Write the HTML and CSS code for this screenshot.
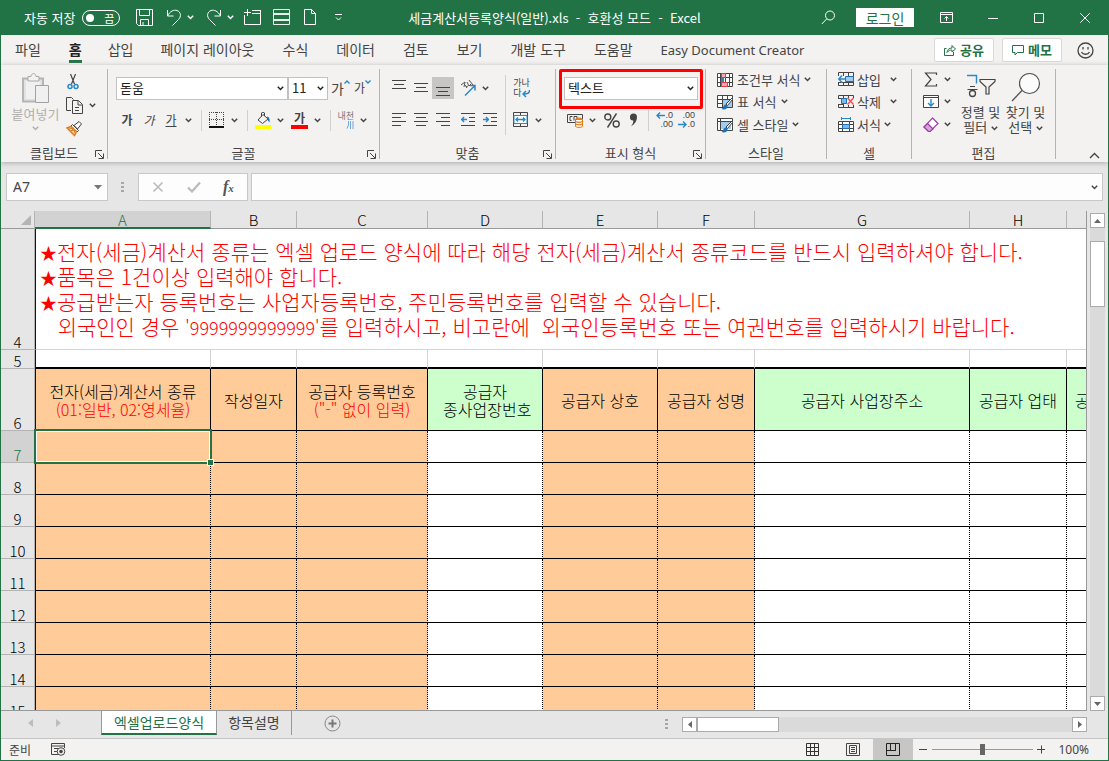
FILE: index.html
```html
<!DOCTYPE html>
<html lang="ko">
<head>
<meta charset="utf-8">
<title>세금계산서등록양식(일반).xls - Excel</title>
<link rel="stylesheet" href="styles.css">
</head>
<body>
<svg class="defs" aria-hidden="true">
  <symbol id="chev" viewBox="0 0 7 5"><path d="M.8 .8 3.5 3.5 6.2 .8" fill="none" stroke="currentColor" stroke-width="1.5"/></symbol>
  <symbol id="launch" viewBox="0 0 9 9"><path d="M.5 7V.5H7M3 3l5 5M8.5 3.5v5h-5" fill="none" stroke="currentColor"/></symbol>
</svg>
<div class="window">
  <header class="titlebar">
    <div class="quick">
      <label class="autosave">자동 저장 <button class="toggle" aria-label="자동 저장"><span class="knob"></span>끔</button></label>
      <button class="qbtn q-save" aria-label="저장"><svg width="17" height="17" viewBox="0 0 17 17"><path d="M.5.5h16v16H2.500l-2-2zM3.500 .5v6h10v-6M4.500 16.500v-6h8v6M7 13v3" /></svg></button>
      <button class="qbtn q-undo" aria-label="실행 취소"><svg width="16" height="17" viewBox="0 0 16 17"><path d="M1.500 1v6h6M1.500 7C4 2 8 .5 11 1.500c4 1.500 4.500 6 1.500 9L6.500 16.500"/></svg><svg class="chev"><use href="#chev"/></svg></button>
      <button class="qbtn q-redo" aria-label="다시 실행"><svg width="16" height="17" viewBox="0 0 16 17"><path d="M14.500 1v6h-6M14.500 7C12 2 8 .5 5 1.500c-4 1.500-4.500 6-1.500 9l6 6"/></svg><svg class="chev"><use href="#chev"/></svg></button>
      <button class="qbtn q-new" aria-label="삽입"><svg width="17" height="17" viewBox="0 0 17 17"><path d="M3.500 0v7M0 3.500h7M8 1.500h8.500M8 4.500h8.500M.5 6v9.500h16V1"/></svg></button>
      <button class="qbtn q-rows" aria-label="행"><svg width="17" height="17" viewBox="0 0 17 17"><path d="M.5.5h16v15H.5zM.5 4.500h16M.5 10.500h16M.5 5.500h16M.5 11.500h16" stroke-width=".9"/></svg></button>
      <button class="qbtn q-file" aria-label="새로 만들기"><svg width="12" height="17" viewBox="0 0 12 17"><path d="M.5.5h7l4 4v11H.5zM7.500.5v4h4"/></svg></button>
      <button class="qbtn q-more" aria-label="사용자 지정"><svg width="7" height="7" viewBox="0 0 7 7"><path d="M0 .5h7M1 3.500l2.500 2.500L6 3.500"/></svg></button>
    </div>
    <div class="doc-title">세금계산서등록양식(일반).xls &nbsp;-&nbsp; 호환성 모드 &nbsp;-&nbsp; Excel</div>
    <div class="win-tools">
      <button class="qbtn" aria-label="검색"><svg width="15" height="15" viewBox="0 0 15 15"><circle cx="9" cy="5.500" r="4.500"/><path d="M5.800 8.800.8 14"/></svg></button>
      <button class="login">로그인</button>
      <button class="qbtn w-ribbon" aria-label="리본 표시 옵션"><svg width="13" height="11" viewBox="0 0 13 11"><path d="M.5.5h12v10H.5zM.5 2.500h12M6.500 9V4.500M4.500 6.500l2-2 2 2"/></svg></button>
      <button class="qbtn w-btn" aria-label="최소화"><svg width="10" height="10" viewBox="0 0 10 10"><path d="M0 5.500h10"/></svg></button>
      <button class="qbtn w-btn" aria-label="최대화"><svg width="10" height="10" viewBox="0 0 10 10"><path d="M.5.5h9v9h-9z"/></svg></button>
      <button class="qbtn w-btn" aria-label="닫기"><svg width="10" height="10" viewBox="0 0 10 10"><path d="M.3.3l9.400 9.400M9.700.3.3 9.700"/></svg></button>
    </div>
  </header>

  <nav class="tabs">
    <a href="#">파일</a><a href="#" class="on">홈</a><a href="#">삽입</a><a href="#">페이지 레이아웃</a><a href="#">수식</a><a href="#">데이터</a><a href="#">검토</a><a href="#">보기</a><a href="#">개발 도구</a><a href="#">도움말</a><a href="#" class="latin">Easy Document Creator</a>
    <div class="tab-actions">
      <button class="pill"><svg width="12" height="12" viewBox="0 0 12 12"><path d="M2.500 4.500h-2v7h9V8M3 8.500C3.500 5.500 5 4 8 4V1.500l3.500 3.500L8 8V6C6 6 4.500 6.500 3 8.500z"/></svg>공유</button>
      <button class="pill"><svg width="12" height="12" viewBox="0 0 12 12"><path d="M.5 1.500h11v7h-6l-2.500 2.500V8.500H.5z"/></svg>메모</button>
      <button class="smile" aria-label="의견"><svg width="17" height="17" viewBox="0 0 17 17"><circle cx="8.500" cy="8.500" r="7.500"/><path d="M4.500 10c1.500 3 6.500 3 8 0M6 5v2.500M11 5v2.500"/></svg></button>
    </div>
  </nav>

  <section class="ribbon">
    <div class="group g-clip">
      <div class="body">
        <button class="paste"><svg width="28" height="31" viewBox="0 0 28 31"><path d="M1 5.500h20v23H1z" fill="#e2e2e2" stroke="#b5b5b5" stroke-width="2"/><path d="M4 8h14v18H4z" fill="#f0f0f0"/><path d="M6 8V3.500h3c.5-4 4.500-4 5 0h3V8z" fill="#f3f2f1" stroke="#a9a9a9"/><path d="M13.500 12.500h13v17h-13z" fill="#f0f0f0" stroke="#a2a2a2"/></svg><span>붙여넣기</span><svg class="chev"><use href="#chev"/></svg></button>
        <div class="clip-col">
          <button aria-label="잘라내기"><svg width="14" height="17" viewBox="0 0 14 17"><path d="M4.500 1l4 10M9.500 1l-4 10" stroke="#444" stroke-width="1.200"/><circle cx="4" cy="13.500" r="2" stroke="#2b88c8" stroke-width="1.500"/><circle cx="10" cy="13.500" r="2" stroke="#2b88c8" stroke-width="1.500"/></svg></button>
          <button aria-label="복사"><svg width="17" height="17" viewBox="0 0 17 17"><path d="M5 13.500H.5V.5h5l2 2M6.500 3.500h6l4 4v9h-10zM12 4v4h4M9 10.500h4M9 13.500h4" stroke="#444"/></svg><svg class="chev"><use href="#chev"/></svg></button>
          <button aria-label="서식 복사"><svg width="17" height="16" viewBox="0 0 17 16"><path d="M8 4.500l5-4 2.500 2.500-4 5z" fill="#f7f7f7" stroke="#444"/><path d="M5 5l6 6 1.500-1.500L6.500 3.500z" fill="#fff" stroke="#444"/><path d="M5 5.500 1 7l7.500 7.500 2-4z" fill="#fde3c8" stroke="#e07b1a" stroke-width="1.500"/><path d="M3 8l5-1-3 3 4-1-1 3" stroke="#e07b1a"/></svg></button>
        </div>
      </div>
      <div class="cap"><span>클립보드</span><button aria-label="클립보드 옵션"><svg><use href="#launch"/></svg></button></div>
    </div>

    <div class="group g-font">
      <div class="body rows">
        <div class="r">
          <label class="combo c-font"><select aria-label="글꼴"><option>돋움</option></select><svg class="chev"><use href="#chev"/></svg></label>
          <label class="combo c-size"><select aria-label="크기"><option>11</option></select><svg class="chev"><use href="#chev"/></svg></label>
          <button class="grow">가<svg width="6" height="4" viewBox="0 0 6 4"><path d="M.5 3.500 3 1l2.500 2.500" stroke="#2b88c8" stroke-width="1.400"/></svg></button>
          <button class="grow shrink">가<svg width="6" height="4" viewBox="0 0 6 4"><path d="M.5.5 3 3 5.500.5" stroke="#2b88c8" stroke-width="1.400"/></svg></button>
        </div>
        <div class="r">
          <button class="ch bold">가</button><button class="ch ital">가</button><button class="ch und"><u>가</u></button><button class="arrow" aria-label="밑줄 옵션"><svg class="chev"><use href="#chev"/></svg></button>
          <i class="sep"></i>
          <button class="ic" aria-label="테두리"><svg width="16" height="16" viewBox="0 0 16 16"><path d="M0 .5h15M0 7.500h15M.5 0v14M7.500 0v14M14.500 0v14" stroke="#444" stroke-dasharray="1 1"/><path d="M0 15h15" stroke="#111" stroke-width="2"/></svg></button><button class="arrow" aria-label="테두리 옵션"><svg class="chev"><use href="#chev"/></svg></button>
          <i class="sep"></i>
          <button class="ic" aria-label="채우기 색"><svg width="16" height="17" viewBox="0 0 16 17"><path d="M8 2.500 3 8l4.500 3.500L13 7zM6.500 4.500V1c0-1 3-1 3 0v3" stroke="#444"/><path d="M12 4.500c2 0 3 2 2.500 6L12.500 8z" fill="#1e6fb8"/><path d="M0 13h16v4H0z" fill="#ff0"/></svg></button><button class="arrow" aria-label="채우기 색 옵션"><svg class="chev"><use href="#chev"/></svg></button>
          <button class="fcolor">가</button><button class="arrow" aria-label="글꼴 색 옵션"><svg class="chev"><use href="#chev"/></svg></button>
          <i class="sep"></i>
          <button class="ruby"><span>내천</span><svg width="8" height="8" viewBox="0 0 8 8"><path d="M2.500 0v4L1 7.500M4.500 0v8M7 0v8" stroke="#6fa8d6"/></svg></button><button class="arrow" aria-label="윗주 옵션"><svg class="chev"><use href="#chev"/></svg></button>
        </div>
      </div>
      <div class="cap"><span>글꼴</span><button aria-label="글꼴 옵션"><svg><use href="#launch"/></svg></button></div>
    </div>

    <div class="group g-align">
      <div class="body">
        <div class="rows">
          <div class="r">
            <button class="al" aria-label="위쪽 맞춤"><svg width="14" height="18" viewBox="0 0 14 18"><path d="M0 1.500h14M2 5.500h10M0 9.500h14"/></svg></button><button class="al" aria-label="가운데 맞춤"><svg width="14" height="18" viewBox="0 0 14 18"><path d="M0 4.500h14M2 8.500h10M0 12.500h14"/></svg></button><button class="al on" aria-label="아래쪽 맞춤"><svg width="14" height="18" viewBox="0 0 14 18"><path d="M0 8.500h14M2 12.500h10M0 16.500h14"/></svg></button>
            <button class="al wide" aria-label="방향"><svg width="17" height="17" viewBox="0 0 17 17"><path d="M5 15.500 14.500 6M10 5.500h5v5" stroke="#2b88c8" stroke-width="1.500"/><path d="M1 5l4-3-1 5M5 5l2 3M6 7l2-1M7 2l2 4 2-2M9 0l4 5" stroke="#555"/></svg></button><button class="arrow" aria-label="방향 옵션"><svg class="chev"><use href="#chev"/></svg></button>
          </div>
          <div class="r">
            <button class="al" aria-label="왼쪽"><svg width="14" height="14" viewBox="0 0 14 14"><path d="M0 .5h14M0 4.500h9M0 8.500h14M0 12.500h9"/></svg></button><button class="al" aria-label="가운데"><svg width="14" height="14" viewBox="0 0 14 14"><path d="M0 .5h14M2 4.500h10M0 8.500h14M2 12.500h10"/></svg></button><button class="al" aria-label="오른쪽"><svg width="14" height="14" viewBox="0 0 14 14"><path d="M0 .5h14M5 4.500h9M0 8.500h14M5 12.500h9"/></svg></button>
            <button class="al wide" aria-label="내어쓰기"><svg width="14" height="14" viewBox="0 0 14 14"><path d="M0 .5h14M8 4.500h6M8 8.500h6M0 12.500h14"/><path d="M0 6.500h6M3 4 .7 6.500 3 9" stroke="#2b88c8" stroke-width="1.500"/></svg></button><button class="al" aria-label="들여쓰기"><svg width="14" height="14" viewBox="0 0 14 14"><path d="M0 .5h14M8 4.500h6M8 8.500h6M0 12.500h14"/><path d="M0 6.500h6M3 4l2.300 2.500L3 9" stroke="#2b88c8" stroke-width="1.500"/></svg></button>
          </div>
        </div>
        <i class="sep tall"></i>
        <div class="rows wraps">
          <div class="r"><button class="wrapbtn"><span>가나<br>다</span><svg width="8" height="8" viewBox="0 0 8 8"><path d="M7.500 0c0 3-1 4-6.500 4M4 1 1 4l3 3" stroke="#2b88c8" stroke-width="1.500"/></svg></button></div>
          <div class="r"><button class="ic" aria-label="병합"><svg width="16" height="16" viewBox="0 0 16 16"><path d="M.5.5h14v14H.5zM7.500 0v3M7.500 12v3" stroke="#444"/><path d="M1 3.500h13v8H1z" fill="#fff" stroke="#2b88c8"/><path d="M3 7.500h9M5 5.500l-2 2 2 2M10 5.500l2 2-2 2" stroke="#2b88c8" stroke-width="1.300"/></svg></button><button class="arrow" aria-label="병합 옵션"><svg class="chev"><use href="#chev"/></svg></button></div>
        </div>
      </div>
      <div class="cap"><span>맞춤</span><button aria-label="맞춤 옵션"><svg><use href="#launch"/></svg></button></div>
    </div>

    <div class="group g-num">
      <div class="body rows">
        <div class="r"><label class="combo c-num"><select aria-label="표시 형식"><option>텍스트</option></select><svg class="chev"><use href="#chev"/></svg></label></div>
        <div class="r nums">
          <button class="ic" aria-label="회계 형식"><svg width="17" height="16" viewBox="0 0 17 16"><path d="M8 10.500H.5v-8h15V7M5.500 4.500H3v4h1.500M7 8.500v-4h3M10 8V4.500" stroke="#444"/><path d="M8.500 7.500h7v7c-2 1.300-5 1.300-7 0z" fill="#fff" stroke="#e07b1a"/><path d="M8.500 9.500c2 1 5 1 7 0M8.500 12c2 1 5 1 7 0M8.500 7.500c2-1.500 5-1.500 7 0" stroke="#e07b1a" stroke-width="1.300"/></svg></button><button class="arrow" aria-label="회계 옵션"><svg class="chev"><use href="#chev"/></svg></button>
          <button class="pct" aria-label="백분율"><svg width="16" height="15" viewBox="0 0 16 15"><circle cx="3.800" cy="4" r="3"/><circle cx="12.200" cy="11" r="3"/><path d="M12.500.5 3.500 14.500"/></svg></button>
          <button class="comma" aria-label="쉼표"><svg width="9" height="14" viewBox="0 0 9 14"><path d="M1 4a3.400 3.400 0 1 1 7 0c0 4-2 7-6 9.500 1.500-2 2.500-4 2.300-6A3.300 3.300 0 0 1 1 4z" fill="#444" stroke="none"/></svg></button>
          <i class="sep"></i>
          <button class="dec"><span><svg width="9" height="7" viewBox="0 0 9 7"><path d="M9 3.500H1M4 .5l-3 3 3 3" stroke="#2b88c8" stroke-width="1.400"/></svg>.0</span><span>.00</span></button>
          <button class="dec"><span>.00</span><span><svg width="9" height="7" viewBox="0 0 9 7"><path d="M0 3.500h8M5 .5l3 3-3 3" stroke="#2b88c8" stroke-width="1.400"/></svg>.0</span></button>
        </div>
      </div>
      <div class="cap"><span>표시 형식</span><button aria-label="표시 형식 옵션"><svg><use href="#launch"/></svg></button></div>
    </div>

    <div class="group g-style">
      <div class="body list">
        <button><svg width="16" height="16" viewBox="0 0 16 16"><path d="M.5 1.500h15v13H.5zM3.500 1.500v13M8.500 1v14M12.500 1.500v13M1 5.500h14M1 10.500h14" fill="#fff" stroke="#444"/><path d="M4.500 1.500h4v4h-4zM4.500 10.500h6v4h-6z" fill="#f7a8b0" stroke="#e03a46"/><path d="M4 6h3v4H4z" fill="#2b88c8"/></svg>조건부 서식<svg class="chev"><use href="#chev"/></svg></button>
        <button><svg width="16" height="16" viewBox="0 0 16 16"><path d="M.5 1.500h15v12H.5zM1 5.500h14M1 9.500h14M5.500 2v11M10.500 2v11" fill="#fff" stroke="#444"/><path d="M6 6h9v7H6z" fill="#9fcbee"/><path d="M15.500 3.500 9 10l1.500 1.500 5-6z" fill="#fff" stroke="#444"/><path d="M9 10.500c-3 0-2 3-4.500 4.500 3 1 6.500 0 6-3z" fill="#1e6fb8"/></svg>표 서식<svg class="chev"><use href="#chev"/></svg></button>
        <button><svg width="16" height="16" viewBox="0 0 16 16"><path d="M.5 1.500h15v12H.5zM1 4.500h14M3.500 2v11" fill="#fff" stroke="#444"/><path d="M4 5h10v7H4z" fill="#9fcbee"/><path d="M15.500 3.500 9 10l1.500 1.500 5-6z" fill="#fff" stroke="#444"/><path d="M9 10.500c-3 0-2 3-4.500 4.500 3 1 6.500 0 6-3z" fill="#1e6fb8"/></svg>셀 스타일<svg class="chev"><use href="#chev"/></svg></button>
      </div>
      <div class="cap"><span>스타일</span></div>
    </div>

    <div class="group g-cell">
      <div class="body list">
        <button class="far"><svg width="16" height="15" viewBox="0 0 16 15"><path d="M.5 4V.5h15v13H.5V10M5.500.5V4M10.500.5V4M5.500 10v3.500M10.500 10v3.500M1 10.500h14" stroke="#444"/><path d="M7.500 4.500h8v5h-8z" fill="#9fcbee" stroke="#1e6fb8"/><path d="M8 7H1M4 3.500.8 7 4 10.500" stroke="#2b88c8" stroke-width="1.500"/></svg>삽입<svg class="chev"><use href="#chev"/></svg></button>
        <button class="far"><svg width="16" height="15" viewBox="0 0 16 15"><path d="M.5 4V1.500h15V4M.5 13.500h15M.5 11v2.500M5.500 1.500V4M10.500 1.500V4M5.500 10v3.500M10.500 11v3M15.500 11v3M0 4.500h5M0 10.500h5" stroke="#444"/><path d="M3.500 4.500h5v5h-5z" fill="#7db8e8" stroke="#1e6fb8"/><path d="M9.500 4l6 6.500M15.500 4l-6 6.500" stroke="#e8505b" stroke-width="1.500"/></svg>삭제<svg class="chev"><use href="#chev"/></svg></button>
        <button><svg width="16" height="16" viewBox="0 0 16 16"><path d="M.5 4.500h15v10H.5zM1 7.500h14M1 11.500h14M4.500 4v11M11.500 4v11" stroke="#444" fill="#fff"/><path d="M4.500 7.500h7v4h-7z" fill="#7db8e8" stroke="#1e6fb8"/><path d="M3.500 0v3M12.500 0v3M4 1.500h8" stroke="#2b88c8"/></svg>서식<svg class="chev"><use href="#chev"/></svg></button>
      </div>
      <div class="cap"><span>셀</span></div>
    </div>

    <div class="group g-edit">
      <div class="body">
        <div class="list small">
          <button aria-label="합계"><svg width="16" height="15" viewBox="0 0 16 15"><path d="M13.500 3V1h-11L8 7.500 2.500 14h11v-2" stroke="#444" stroke-width="1.200"/></svg><svg class="chev"><use href="#chev"/></svg></button>
          <button aria-label="채우기"><svg width="16" height="14" viewBox="0 0 16 14"><path d="M.5.5h15v12H.5zM0 2.500h16" fill="#fff" stroke="#444"/><path d="M8 4v7M5 8l3 3 3-3" stroke="#2b88c8" stroke-width="1.400"/></svg><svg class="chev"><use href="#chev"/></svg></button>
          <button aria-label="지우기"><svg width="16" height="16" viewBox="0 0 16 16"><path d="M9.500 1 15 6.500 7 14.500H5.500L1 10z" fill="#fff" stroke="#9b3fa5" stroke-width="1.200"/><path d="M4.500 6.500 10 12l-3 2.500H5.500L1 10z" fill="#d9a3e0" stroke="#9b3fa5" stroke-width="1.200"/></svg><svg class="chev"><use href="#chev"/></svg></button>
        </div>
        <button class="big"><svg width="30" height="32" viewBox="0 0 30 32"><path d="M1 3.500h9.500v8" stroke="#2b88c8" stroke-width="1.400"/><path d="M14 7.500h15v2l-6 5.500v7h-3v-7l-6-5.500zM4 14.500h5M1.500 17.500h10" stroke="#444" stroke-width="1.200"/><circle cx="6.500" cy="21.500" r="3" stroke="#444" stroke-width="1.300"/></svg><span>정렬 및<br>필터 <svg class="chev"><use href="#chev"/></svg></span></button>
        <button class="big"><svg width="30" height="32" viewBox="0 0 30 32"><circle cx="18.500" cy="11.500" r="10" fill="#fbfbfb" stroke="#555" stroke-width="1.200"/><path d="M11 18.500 1 29" stroke="#555" stroke-width="1.300"/></svg><span>찾기 및<br>선택 <svg class="chev"><use href="#chev"/></svg></span></button>
      </div>
      <div class="cap"><span>편집</span></div>
    </div>
    <button class="collapse" aria-label="리본 축소"><svg width="11" height="7" viewBox="0 0 11 7"><path d="M1 6l4.500-4.500L10 6" stroke="#444" stroke-width="1.400"/></svg></button>
  </section>

  <section class="formula">
    <label class="namebox"><input value="A7" aria-label="이름 상자"><svg width="8" height="5" viewBox="0 0 8 5"><path d="M0 0h8L4 4.500z" fill="#777"/></svg></label>
    <span class="dots"></span>
    <div class="fxbox">
      <button aria-label="취소"><svg width="12" height="12" viewBox="0 0 12 12"><path d="M1.500 1.500l9 9M10.500 1.500l-9 9" stroke="#bbb" stroke-width="1.600"/></svg></button>
      <button aria-label="입력"><svg width="14" height="12" viewBox="0 0 14 12"><path d="M1 6.500l4 4L13 1.500" stroke="#bbb" stroke-width="2.200"/></svg></button>
      <button class="fx"><i>f<small>x</small></i></button>
    </div>
    <label class="fxinput"><input aria-label="수식 입력줄"><svg class="chev"><use href="#chev"/></svg></label>
  </section>

  <main class="work">
    <div class="sheet">
      <table>
        <colgroup><col class="k0"><col class="kA"><col class="kB"><col class="kC"><col class="kD"><col class="kE"><col class="kF"><col class="kG"><col class="kH"><col></colgroup>
        <thead><tr><th class="corner"><svg width="10" height="10" viewBox="0 0 10 10"><path d="M10 0v10H0z" fill="#b4b4b4"/></svg></th><th class="sel">A</th><th>B</th><th>C</th><th>D</th><th>E</th><th>F</th><th>G</th><th>H</th><th></th></tr></thead>
        <tbody>
          <tr class="r4"><th>4</th><td colspan="9"><b>★</b>전자(세금)계산서 종류는 엑셀 업로드 양식에 따라 해당 전자(세금)계산서 종류코드를 반드시 입력하셔야 합니다.
<b>★</b>품목은 1건이상 입력해야 합니다.
<b>★</b>공급받는자 등록번호는 사업자등록번호, 주민등록번호를 입력할 수 있습니다.
   외국인인 경우 <span class="digits">'9999999999999'</span>를 입력하시고, 비고란에  외국인등록번호 또는 여권번호를 입력하시기 바랍니다.</td></tr>
          <tr class="r5"><th>5</th><td></td><td></td><td></td><td></td><td></td><td></td><td></td><td></td><td></td></tr>
          <tr class="r6"><th>6</th><td class="o">전자(세금)계산서 종류<br><em>(01:일반, 02:영세율)</em></td><td class="o">작성일자</td><td class="o">공급자 등록번호<br><em>("-" 없이 입력)</em></td><td class="g">공급자<br>&nbsp;종사업장번호</td><td class="o">공급자 상호</td><td class="o">공급자 성명</td><td class="g">공급자 사업장주소</td><td class="g">공급자 업태</td><td class="g cut">공</td></tr>
          <tr class="d cur"><th>7</th><td class="o"><span class="cursor"></span></td><td class="o"></td><td class="o"></td><td></td><td class="o"></td><td class="o"></td><td></td><td></td><td></td></tr>
          <tr class="d"><th>8</th><td class="o"></td><td class="o"></td><td class="o"></td><td></td><td class="o"></td><td class="o"></td><td></td><td></td><td></td></tr>
          <tr class="d"><th>9</th><td class="o"></td><td class="o"></td><td class="o"></td><td></td><td class="o"></td><td class="o"></td><td></td><td></td><td></td></tr>
          <tr class="d"><th>10</th><td class="o"></td><td class="o"></td><td class="o"></td><td></td><td class="o"></td><td class="o"></td><td></td><td></td><td></td></tr>
          <tr class="d"><th>11</th><td class="o"></td><td class="o"></td><td class="o"></td><td></td><td class="o"></td><td class="o"></td><td></td><td></td><td></td></tr>
          <tr class="d"><th>12</th><td class="o"></td><td class="o"></td><td class="o"></td><td></td><td class="o"></td><td class="o"></td><td></td><td></td><td></td></tr>
          <tr class="d"><th>13</th><td class="o"></td><td class="o"></td><td class="o"></td><td></td><td class="o"></td><td class="o"></td><td></td><td></td><td></td></tr>
          <tr class="d"><th>14</th><td class="o"></td><td class="o"></td><td class="o"></td><td></td><td class="o"></td><td class="o"></td><td></td><td></td><td></td></tr>
          <tr class="d"><th>15</th><td class="o"></td><td class="o"></td><td class="o"></td><td></td><td class="o"></td><td class="o"></td><td></td><td></td><td></td></tr>
        </tbody>
      </table>
    </div>
    <div class="vscroll">
      <button aria-label="위로"><svg width="7" height="4" viewBox="0 0 7 4"><path d="M0 4h7L3.500 0z"/></svg></button>
      <div class="track"><div class="thumb"></div></div>
      <button aria-label="아래로"><svg width="7" height="4" viewBox="0 0 7 4"><path d="M0 0h7L3.500 4z"/></svg></button>
    </div>
  </main>

  <section class="sheetbar">
    <div class="nav"><button aria-label="이전"><svg width="5" height="8" viewBox="0 0 5 8"><path d="M5 0v8L0 4z"/></svg></button><button aria-label="다음"><svg width="5" height="8" viewBox="0 0 5 8"><path d="M0 0v8l5-4z"/></svg></button></div>
    <button class="stab on">엑셀업로드양식</button><button class="stab">항목설명</button>
    <button class="add" aria-label="새 시트"><svg width="17" height="17" viewBox="0 0 17 17"><circle cx="8.500" cy="8.500" r="7.500" stroke="#888"/><path d="M4.500 8.500h8M8.500 4.500v8" stroke="#777" stroke-width="2"/></svg></button>
    <span class="dots"></span>
    <div class="hscroll">
      <button aria-label="왼쪽으로"><svg width="4" height="7" viewBox="0 0 4 7"><path d="M4 0v7L0 3.500z"/></svg></button>
      <div class="track"><div class="thumb"></div></div>
      <button aria-label="오른쪽으로"><svg width="4" height="7" viewBox="0 0 4 7"><path d="M0 0v7l4-3.500z"/></svg></button>
    </div>
  </section>

  <footer class="status">
    <span>준비</span>
    <button class="macro" aria-label="매크로 기록"><svg width="15" height="13" viewBox="0 0 15 13"><path d="M7 11.500H.5V.5h13V5M0 3h14M3 5.500h4M3 8.500h3" stroke="#444"/><circle cx="10" cy="8.500" r="3.800" stroke="#444" fill="#f3f2f1"/><circle cx="10" cy="8.500" r="1.800" fill="#444"/></svg></button>
    <div class="views">
      <button aria-label="기본"><svg width="14" height="13" viewBox="0 0 14 13"><path d="M.5.5h12v12H.5zM4.500 0v13M8.500 0v13M0 4.500h13M0 8.500h13" stroke="#333"/></svg></button>
      <button aria-label="페이지 레이아웃"><svg width="14" height="13" viewBox="0 0 14 13"><path d="M.5.5h13v12H.5zM3.500 2.500h7v8h-7zM5 4.500h4M5 6.500h4M5 8.500h4" stroke="#444"/></svg></button>
      <button class="on" aria-label="페이지 나누기"><svg width="14" height="13" viewBox="0 0 14 13"><path d="M.5.5h13v12H.5zM0 7.500h9M4.500 0v7M9.500 0v8" stroke="#222"/></svg></button>
    </div>
    <div class="zoom">
      <button aria-label="축소"><svg width="9" height="9" viewBox="0 0 9 9"><path d="M0 4.500h8" stroke="#444"/></svg></button>
      <input type="range" min="0" max="100" value="50" aria-label="확대/축소">
      <button aria-label="확대"><svg width="9" height="9" viewBox="0 0 9 9"><path d="M0 4.500h8M4.500 .5v8" stroke="#444"/></svg></button>
      <span class="pc">100%</span>
    </div>
  </footer>
</div>
</body>
</html>
```
FILE: styles.css
```css
* { box-sizing: border-box; }
body { margin: 0; font-family: "Noto Sans CJK KR", sans-serif; font-size: 13px; line-height: 16px; color: #444; }
button { border: 0; padding: 0; margin: 0; background: none; color: inherit; font: inherit; display: flex; align-items: center; justify-content: center; white-space: nowrap; }
input, select { font: inherit; color: inherit; border: 0; margin: 0; outline: 0; background: none; min-width: 0; border-radius: 0; }
svg { fill: none; flex: none; display: block; }
a { color: inherit; text-decoration: none; }
.defs { display: none; }
.chev { width: 7px; height: 5px; }
.window { height: 100vh; display: flex; flex-direction: column; border: 1px solid #217346; border-top: 0; background: #e6e6e6; overflow: hidden; }

/* title bar */
.titlebar { flex: none; height: 35px; background: #217346; color: #fff; display: grid; grid-template-columns: 1fr auto 1fr; align-items: center; }
.titlebar svg { stroke: #fff; }
.titlebar .chev { stroke: none; }
.quick { display: flex; align-items: center; padding-left: 23px; }
.autosave { display: flex; align-items: center; gap: 7px; }
.toggle { width: 38px; height: 16px; border: 1px solid #fff; border-radius: 8px; font-size: 11px; justify-content: space-between; padding: 0 5px 0 3px; line-height: 12px; }
.knob { width: 8px; height: 8px; border-radius: 50%; background: #fff; }
.qbtn { gap: 5px; }
.q-save { margin-left: 16px; }
.q-undo { margin-left: 13px; }
.q-redo, .q-rows { margin-left: 12px; }
.q-new { margin-left: 10px; }
.q-file { margin-left: 14px; }
.q-more { margin-left: 19px; }
.win-tools { display: flex; align-items: center; justify-content: flex-end; padding-right: 18px; }
.login { background: #fff; color: #217346; width: 58px; height: 19px; margin: 0 26px 0 20px; font-size: 14px; }
.w-btn { margin-left: 36px; }
.w-ribbon + .w-btn { margin-left: 35px; }

/* tabs */
.tabs { flex: none; height: 30px; background: #f3f2f1; display: flex; align-items: stretch; font-size: 14px; line-height: 28px; white-space: nowrap; }
.tabs > a { padding: 0 14px; }
.tabs > a:nth-child(3) { padding: 0 13px; }
.tabs > a.on { font-weight: 700; color: #222; display: flex; flex-direction: column; padding-right: 13px; }
.tabs > a.on::after { content: ""; height: 3px; margin-top: -3px; background: #217346; }
.tabs > a.latin { font-family: "Noto Sans", sans-serif; font-size: 13px; line-height: 30px; }
.tab-actions { margin-left: auto; display: flex; align-items: center; gap: 8px; padding-right: 14px; }
.pill { height: 24px; width: 60px; gap: 4px; background: #fff; border: 1px solid #dcdad8; border-radius: 2px; color: #217346; font-weight: 700; font-size: 13px; line-height: 20px; }
.pill svg { stroke: #217346; }
.smile { margin-left: 7px; }
.smile svg { stroke: #444; stroke-width: 1.300; }

/* ribbon */
.ribbon { flex: none; display: flex; background: #f3f2f1; padding: 4px 0 3px; box-shadow: 0 1px 5px #aaa; z-index: 1; }
.group { height: 90px; border-right: 1px solid #b6b4b2; display: flex; flex-direction: column; justify-content: space-between; flex: none; }
.body { display: flex; align-items: flex-start; }
.cap { display: grid; grid-template-columns: 12px 1fr 12px; height: 13px; align-items: center; line-height: 13px; }
.cap span { grid-column: 2; text-align: center; }
.cap button { grid-column: 3; justify-content: flex-start; align-self: end; }
.cap svg { width: 9px; height: 9px; }
.g-clip { width: 107px; }
.g-font { width: 272px; }
.g-align { width: 176px; }
.g-num { width: 150px; }
.g-style { width: 121px; }
.g-cell { width: 85px; }
.g-edit { width: 144px; }
.paste { flex-direction: column; width: 59px; padding: 4px 0 0 10px; color: #b1afad; }
.paste span { margin: 2px 0 4px; }
.clip-col { display: flex; flex-direction: column; padding-left: 6px; }
.clip-col button { height: 24px; justify-content: flex-start; gap: 6px; }
.body.rows, .body .rows { display: flex; flex-direction: column; align-items: stretch; gap: 8px; padding: 7px 0 0 8px; }
.r { height: 24px; display: flex; align-items: center; }
.combo { display: grid; grid-template-columns: 1fr 14px; align-items: center; height: 23px; border: 1px solid #c4c2c0; background: #fff; color: #222; position: relative; }
.combo select { appearance: none; grid-area: 1 / 1 / 2 / 3; padding: 0 3px; height: 21px; line-height: 20px; }
.combo > .chev { grid-area: 1 / 2; justify-self: center; }
.c-font { width: 172px; }
.c-size { width: 40px; }
.c-num { width: 134px; }
.c-num::after { content: ""; position: absolute; inset: -9px -6px -10px; border: 3px solid #f00; border-radius: 2px; pointer-events: none; }
.grow { margin-left: 3px; align-items: flex-start; font-size: 14px; line-height: 16px; }
.shrink { font-size: 12px; margin-left: 4px; }
.ch { width: 22px; font-size: 12px; }
.bold { font-weight: 700; }
.ital { font-style: italic; }
.arrow { width: 13px; height: 20px; margin-left: 3px; }
.und + .arrow, .wide + .arrow { margin-left: 0; }
.sep { width: 1px; height: 21px; background: #d2d0ce; margin: 0 7px 0 6px; }
.ic { width: 16px; }
.fcolor { width: 17px; height: 17px; margin-left: 4px; border-bottom: 4px solid #f00; font-weight: 700; font-size: 12px; line-height: 12px; }
.ruby { width: 16px; height: 18px; flex-direction: column; align-items: flex-end; font-size: 9px; line-height: 10px; color: #777; }
.al { width: 22px; height: 22px; }
.al svg { stroke: #444; }
.al.on { background: #c8c6c4; }
.wide { margin-left: 3px; }
.sep.tall { height: 60px; margin: 6px 0 0 4px; }
.body .rows.wraps { padding-left: 7px; }
.wrapbtn { align-items: flex-end; font-size: 9px; line-height: 10px; text-align: left; width: 17px; }
.wrapbtn svg { margin-left: -8px; }
.nums { padding-left: 3px; }
.pct { width: 16px; margin-left: 5px; }
.pct svg { stroke: #444; stroke-width: 1.400; }
.comma { width: 9px; margin-left: 9px; }
.nums .sep { margin: 0 6px 0 10px; }
.dec { flex-direction: column; align-items: flex-end; width: 18px; font-family: "Liberation Sans", sans-serif; font-size: 9px; line-height: 9px; }
.dec + .dec { margin-left: 4px; }
.dec span { display: flex; align-items: center; }
.list { flex-direction: column; align-items: flex-start; padding-left: 11px; }
.list button { height: 23px; gap: 4px; }
.list button:first-child { height: 21px; }
.list .far .chev { margin-left: 6px; }
.g-cell .list button { gap: 3px; }
.small { display: flex; width: 46px; }
.small button { gap: 5px; }
.big { flex-direction: column; align-items: center; width: 45px; padding-top: 3px; line-height: 15px; }
.big span { text-align: center; }
.big .chev { display: inline-block; vertical-align: middle; }
.collapse { margin-left: auto; align-self: flex-end; padding: 0 8px 0 0; }

/* formula bar */
.formula { flex: none; display: flex; padding: 11px 5px 10px; color: #444; }
.formula label, .fxbox { height: 28px; background: #fdfdfd; border: 1px solid #c8c8c8; display: flex; align-items: center; }
.namebox { width: 102px; padding: 0 5px; }
.namebox input { flex: 1; width: 60px; font-family: "Noto Sans", sans-serif; font-size: 14px; padding: 0 1px; }
.dots { width: 3px; height: 11px; background: repeating-linear-gradient(#a6a6a6 0 2px, transparent 2px 4px); margin: auto 14px auto 13px; flex: none; }
.fxbox { width: 110px; justify-content: space-around; padding: 0 2px; margin-right: 3px; }
.fx { font-family: "Liberation Serif", serif; font-size: 16px; font-weight: 700; color: #555; }
.fx small { font-size: 11px; }
.fxinput { flex: 1; padding-right: 4px; }
.fxinput input { flex: 1; }

/* sheet */
.work { flex: 1; min-height: 0; display: flex; }
.sheet { flex: 1; min-width: 0; overflow: hidden; border-right: 1px solid #999; border-bottom: 1px solid #999; }
.sheet table { width: 100%; table-layout: fixed; border-collapse: separate; border-spacing: 0; color: #000; }
.k0 { width: 34px; } .kA { width: 176px; } .kB { width: 86px; } .kC { width: 131px; } .kD, .kE { width: 115px; } .kF, .kH { width: 97px; } .kG { width: 215px; }
.sheet th, .sheet td { padding: 0; }
.sheet th { font-weight: 300; font-size: 15px; line-height: 15px; background: #e6e6e6; border: 0 solid #b4b4b4; border-width: 0 1px 1px 0; }
.sheet thead th { height: 18px; border-bottom-color: #999; }
.sheet thead th:last-child { border-right: 0; }
.sheet .corner { vertical-align: bottom; }
.corner svg { margin: 0 3px 3px auto; }
.sheet thead th.sel { background: #d2d2d2; color: #217346; border-bottom: 2px solid #217346; }
.sheet tbody th { vertical-align: bottom; }
.sheet tbody th + td { border-left: 1px solid #00a; }
.sheet td { background: #fff; text-align: center; font-size: 16px; line-height: 18px; border-bottom: 1px solid #000; border-right: 1px solid #000; white-space: nowrap; font-weight: 300; }
.sheet td:last-child { border-right: 0; }
.sheet td.o { background: #fc9; }
.sheet td.g { background: #cfc; }
.sheet td em { font-style: normal; color: #f00; }
.r4 { height: 121px; }
.sheet .r4 td { color: #f00; font-size: 21px; line-height: 25px; white-space: pre; text-align: left; padding-left: 4px; border-bottom-color: #d4d4d4; }
.r4 b { font-size: 17px; line-height: 20px; }
.digits { font-size: 18px; line-height: 20px; }
.r5 { height: 19px; }
.sheet .r5 td { border-right-color: #d4d4d4; border-bottom: 2px solid #000; }
.r6 { height: 62px; }
.sheet .cut { text-align: left; padding-left: 8px; }
.d { height: 32px; }
.sheet .d td { border-right-style: dotted; }
.sheet .cur th { background: #d2d2d2; color: #217346; }
.sheet .cur td:nth-child(2) { position: relative; }
.cursor { position: absolute; inset: -2px; border: 2px solid #217346; box-shadow: inset 0 0 0 1px #fff; z-index: 1; }
.cursor::after { content: ""; position: absolute; right: -3px; bottom: -3px; width: 5px; height: 5px; background: #217346; box-shadow: 0 0 0 1px #fff; }
.vscroll { width: 15px; margin: 2px 3px 0; display: flex; flex-direction: column; }
.vscroll button, .hscroll button { width: 15px; height: 15px; background: #fff; border: 1px solid #ababab; flex: none; }
.vscroll button svg, .hscroll button svg { fill: #666; }
.track { flex: 1; background: #dadada; display: flex; }
.thumb { background: #fff; border: 1px solid #ababab; }
.vscroll .track { padding-top: 13px; }
.vscroll .thumb { width: 15px; height: 66px; }

/* sheet tabs */
.sheetbar { flex: none; height: 28px; display: flex; align-items: flex-start; border-bottom: 1px solid #c6c6c6; padding-right: 21px; }
.nav { width: 100px; display: flex; gap: 23px; padding: 8px 0 0 27px; }
.nav svg { fill: #bdbdbd; }
.stab { height: 24px; font-size: 14px; line-height: 20px; }
.stab.on { background: #fff; color: #217346; border: solid #999; border-width: 0 1px; width: 116px; border-bottom: 2px solid #217346; }
.stab:not(.on) { width: 75px; border-right: 1px solid #999; padding-bottom: 2px; }
.add { margin: 4px auto 0 32px; }
.sheetbar .dots { margin: 8px 14px 0; }
.hscroll { width: 405px; display: flex; margin-top: 6px; }
.hscroll .thumb { width: 82px; height: 15px; }

/* status bar */
.status { flex: none; height: 21px; background: #f3f2f1; display: flex; align-items: center; padding-left: 8px; font-size: 12px; }
.macro { margin-left: 20px; }
.views { margin-left: auto; display: flex; align-self: stretch; }
.views button { width: 40px; }
.views .on { background: #c8c6c4; }
.zoom { display: flex; align-items: center; padding: 0 19px 0 6px; gap: 4px; }
.zoom input { appearance: none; width: 101px; height: 11px; background: linear-gradient(#999, #999) center / 100% 1px no-repeat; }
.zoom input::-webkit-slider-thumb { appearance: none; width: 5px; height: 11px; background: #666; }
.pc { margin-left: 8px; font-family: "Noto Sans", sans-serif; font-size: 12px; }
```
